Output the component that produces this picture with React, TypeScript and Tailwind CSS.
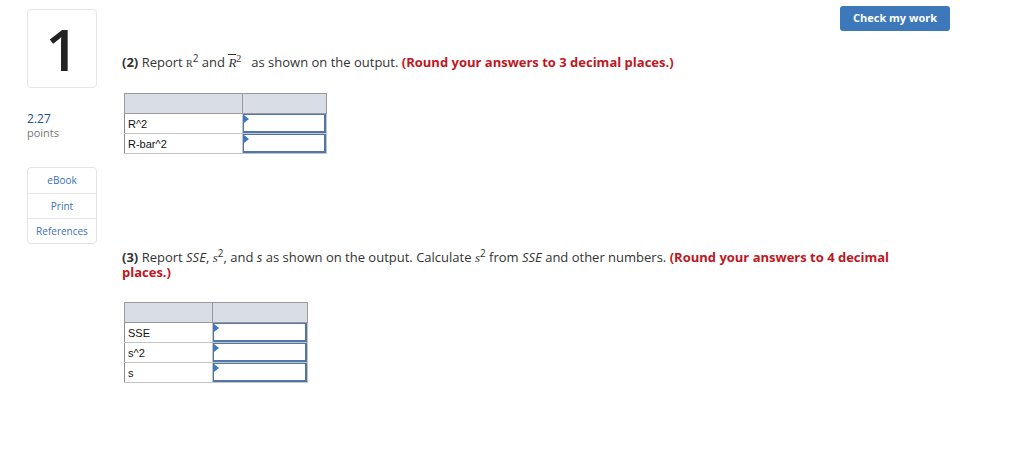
import React from "react";

const sans = "font-['Open_Sans',sans-serif]";

function Corner() {
  return (
    <span className="absolute left-0 top-0 w-0 h-0 border-t-[4px] border-b-[4px] border-l-[5px] border-t-transparent border-b-transparent border-l-[#3b78c4]" />
  );
}

function AnswerTable({ rows, labelW, inputW }: { rows: string[]; labelW: number; inputW: number }) {
  return (
    <table className="border-collapse border border-[#8a8a8a] font-['Liberation_Sans',Arial,sans-serif] text-[11px] text-[#111]">
      <tbody>
        <tr className="h-[20px] bg-[#d9dde6]">
          <td className="border border-[#9a9a9a] p-0" style={{ width: labelW }} />
          <td className="border border-[#9a9a9a] p-0" style={{ width: inputW }} />
        </tr>
        {rows.map((r) => (
          <tr key={r} className="h-[20px]">
            <td className="border border-[#c4c4c4] border-l-[#8a8a8a] px-[3px] py-0 leading-[18px]">{r}</td>
            <td className="border border-[#c4c4c4] p-0">
              <div className="relative h-[19px] border-2 border-[#4f76ab] border-t-[1px] border-l-[1px] bg-white">
                <Corner />
              </div>
            </td>
          </tr>
        ))}
      </tbody>
    </table>
  );
}

export default function App() {
  return (
    <div className={`w-[1024px] h-[456px] bg-white relative ${sans} text-[#333]`}>
      <div className="flex">
        {/* left column */}
        <div className="ml-[27px] mt-[9px] w-[70px] flex flex-col">
          <div className="h-[79px] rounded-[4px] border border-[#e6e6e6] flex items-center justify-center">
            <span className="text-[58px] leading-none text-[#222] font-semibold">1</span>
          </div>
          <div className="mt-[24px] text-[12px] leading-[14px] text-[#1c4f8c]">2.27</div>
          <div className="text-[11px] leading-[14px] text-[#777]">points</div>
          <div className="mt-[27px] rounded-[4px] border border-[#e3e3e3] text-[10px] text-[#3a70b5] text-center">
            <div className="h-[26px] flex items-center justify-center border-b border-[#e6e6e6]">eBook</div>
            <div className="h-[25px] flex items-center justify-center border-b border-[#e6e6e6]">Print</div>
            <div className="h-[24px] flex items-center justify-center">References</div>
          </div>
        </div>

        {/* main */}
        <div className="ml-[25px] flex-1 pr-[74px] flex flex-col">
          <div className="flex justify-end mt-[6px]">
            <button className="h-[25px] w-[110px] rounded-[3px] bg-[#3d78bb] text-white text-[11px] font-bold">
              Check my work
            </button>
          </div>

          <p className="mt-[24px] text-[13px] leading-[15px]">
            <span className="font-bold">(2)</span> Report{" "}
            <span className="font-['Liberation_Serif',serif] text-[10px]">R</span>
            <sup className="text-[10px]">2</sup> and{" "}
            <span className="font-['Liberation_Serif',serif] italic">
              <span className="border-t border-[#333]">R</span>
              <sup className="text-[10px] not-italic">2</sup>
            </span>
            <span className="ml-[10px]">as shown on the output. </span>
            <span className="font-bold text-[#c0161e]">(Round your answers to 3 decimal places.)</span>
          </p>

          <div className="mt-[22px] ml-[2px]">
            <AnswerTable rows={["R^2", "R-bar^2"]} labelW={118} inputW={84} />
          </div>

          <p className="mt-[96px] text-[13px] leading-[15px] max-w-[775px]">
            <span className="font-bold">(3)</span> Report <i>SSE</i>,{" "}
            <span className="font-['Liberation_Serif',serif] italic">s</span>
            <sup className="text-[10px]">2</sup>, and <i>s</i> as shown on the output. Calculate{" "}
            <span className="font-['Liberation_Serif',serif] italic">s</span>
            <sup className="text-[10px]">2</sup> from <i>SSE</i> and other numbers.{" "}
            <span className="font-bold text-[#c0161e]">(Round your answers to 4 decimal places.)</span>
          </p>

          <div className="mt-[22px] ml-[2px]">
            <AnswerTable rows={["SSE", "s^2", "s"]} labelW={88} inputW={95} />
          </div>
        </div>
      </div>
    </div>
  );
}
